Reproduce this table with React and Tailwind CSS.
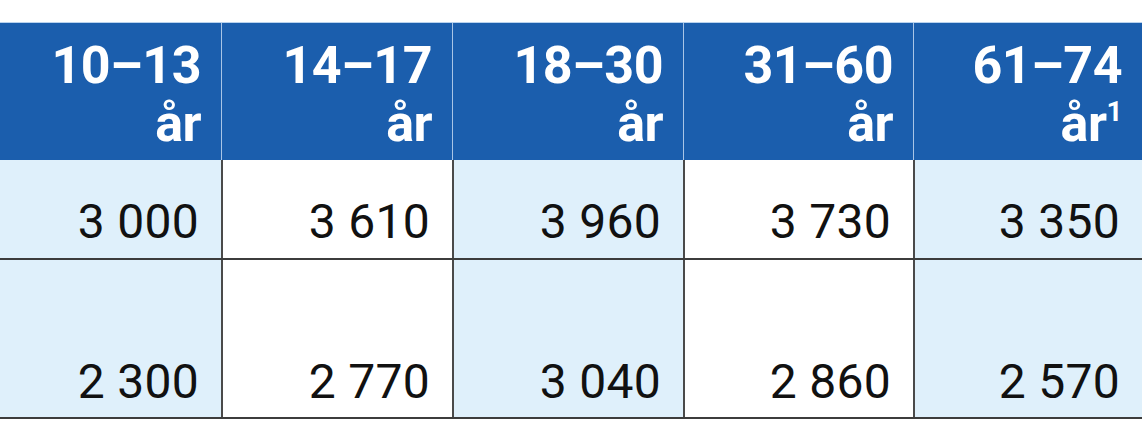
import React from 'react'

const headers = [
  { range: '10–13', unit: 'år' },
  { range: '14–17', unit: 'år' },
  { range: '18–30', unit: 'år' },
  { range: '31–60', unit: 'år' },
  { range: '61–74', unit: 'år', note: '1' },
]

const rows = [
  { values: ['3 000', '3 610', '3 960', '3 730', '3 350'], h: 'h-[98px]', pb: 'pb-[12px]' },
  { values: ['2 300', '2 770', '3 040', '2 860', '2 570'], h: 'h-[157px]', pb: 'pb-[11px]' },
]

const widths = ['w-[221px]', 'w-[231px]', 'w-[231px]', 'w-[230px]', 'w-[229px]']

const App = () => {
  return (
    <div className="w-[1148px] h-[431px] bg-white pt-[22px]" style={{ fontFamily: 'Roboto, "Liberation Sans", sans-serif' }}>
      <div className="w-[1142px] border-t border-[#b9d3ee]">
        <div className="flex bg-[#1b5ead]">
          {headers.map((col, i) => (
            <div
              key={i}
              className={`${widths[i]} ${i > 0 ? 'border-l-[1.5px] border-[#a9c5e6]' : ''} h-[137px] pt-[14px] pr-5 text-right text-white font-bold text-[52px] leading-[58px] tracking-[-0.5px]`}
            >
              <div>{col.range}</div>
              <div>
                {col.unit}
                {col.note && <sup className="text-[28px] align-super leading-none relative -top-[2px]">{col.note}</sup>}
              </div>
            </div>
          ))}
        </div>
        {rows.map((row, r) => (
          <div key={r} className="flex border-b-2 border-[#3c3c3c]">
            {row.values.map((v, i) => (
              <div
                key={i}
                className={`${widths[i]} ${row.h} ${i > 0 ? 'border-l-2 border-[#4a4a4a]' : ''} ${i % 2 === 0 ? 'bg-[#dff0fb]' : 'bg-white'} flex items-end justify-end pr-[22px] ${row.pb} text-[48px] leading-none text-[#111] tracking-[0.3px]`}
              >
                {v}
              </div>
            ))}
          </div>
        ))}
      </div>
    </div>
  )
}

export default App
